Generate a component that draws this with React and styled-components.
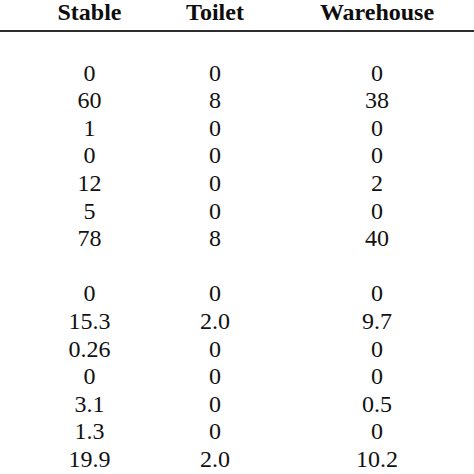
import React from "react";
import styled, { createGlobalStyle } from "styled-components";

const GlobalStyle = createGlobalStyle`
  html, body {
    margin: 0;
    padding: 0;
    background: #ffffff;
  }
  body {
    width: 474px;
    height: 474px;
    overflow: hidden;
    font-family: "Liberation Serif", "Times New Roman", serif;
  }
`;

const Table = styled.div`
  width: 474px;
  color: #111111;
`;

const Row = styled.div`
  display: grid;
  grid-template-columns: 99px 152px 172px;
  padding-left: 40px;
  height: ${({ $blank }) => ($blank ? "27.6px" : "auto")};
`;

const HeaderRow = styled(Row)`
  padding-bottom: 10px;
  border-bottom: 2px solid #2e2e2e;
`;

const HeadCell = styled.div`
  font-family: "Liberation Serif", "Times New Roman", serif;
  text-align: center;
  font-size: 24px;
  font-weight: 700;
  line-height: 16px;
  padding-top: 4px;
  color: #0d0d0d;
`;

const Cell = styled.div`
  font-family: "Liberation Serif", "Times New Roman", serif;
  text-align: center;
  font-size: 24px;
  line-height: 27.6px;
  color: #111111;
`;

const groups = [
  [
    ["0", "0", "0"],
    ["60", "8", "38"],
    ["1", "0", "0"],
    ["0", "0", "0"],
    ["12", "0", "2"],
    ["5", "0", "0"],
    ["78", "8", "40"],
  ],
  [
    ["0", "0", "0"],
    ["15.3", "2.0", "9.7"],
    ["0.26", "0", "0"],
    ["0", "0", "0"],
    ["3.1", "0", "0.5"],
    ["1.3", "0", "0"],
    ["19.9", "2.0", "10.2"],
  ],
];

const App = () => {
  return (
    <>
      <GlobalStyle />
      <Table>
        <HeaderRow>
          <HeadCell>Stable</HeadCell>
          <HeadCell>Toilet</HeadCell>
          <HeadCell>Warehouse</HeadCell>
        </HeaderRow>
        {groups.map((rows, g) => (
          <React.Fragment key={g}>
            <Row $blank />
            {rows.map((r, i) => (
              <Row key={i}>
                {r.map((v, j) => (
                  <Cell key={j}>{v}</Cell>
                ))}
              </Row>
            ))}
          </React.Fragment>
        ))}
      </Table>
    </>
  );
};

export default App;
